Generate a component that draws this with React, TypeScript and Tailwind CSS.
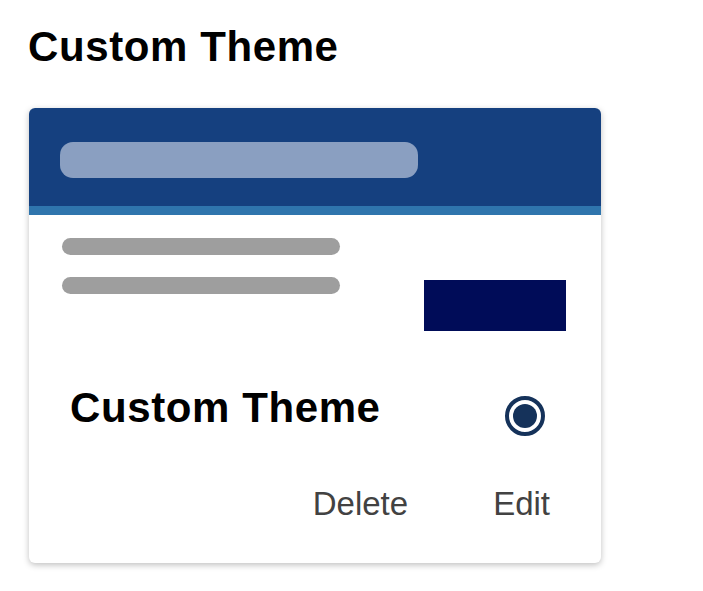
import React from "react";

export default function App() {
  return (
    <div className="min-h-[591px] w-[703px] bg-white pl-[28px] pt-[23px]" style={{ fontFamily: "'Liberation Sans', Arial, sans-serif" }}>
      <h1 className="text-[42px] font-bold leading-[48px] text-black tracking-[0.6px]">Custom Theme</h1>
      <div className="mt-[37px] ml-[1px] w-[572px] h-[455px] rounded-[6px] bg-white overflow-hidden shadow-[0_2px_6px_rgba(0,0,0,0.25)] flex flex-col">
        <div className="h-[98px] bg-[#15407f] pl-[31px] pt-[34px]">
          <div className="h-[36px] w-[358px] rounded-[13px] bg-[#8a9fc1]" />
        </div>
        <div className="h-[9px] bg-[#2f75ad]" />
        <div className="flex items-start justify-between pl-[33px] pr-[35px] pt-[23px]">
          <div className="flex flex-col gap-[22px]">
            <div className="h-[17px] w-[278px] rounded-full bg-[#9e9e9e]" />
            <div className="h-[17px] w-[278px] rounded-full bg-[#9e9e9e]" />
          </div>
          <div className="mt-[42px] h-[51px] w-[142px] bg-[#000c58]" />
        </div>
        <div className="mt-[53px] flex h-[48px] items-start justify-between pl-[41px] pr-[56px]">
          <span className="text-[42px] font-bold leading-[48px] text-black tracking-[0.6px]">Custom Theme</span>
          <div className="mt-[12px] flex h-[40px] w-[40px] items-center justify-center rounded-full border-[4px] border-[#15325a]">
            <div className="h-[24px] w-[24px] rounded-full bg-[#15325a]" />
          </div>
        </div>
        <div className="mt-[52px] flex justify-end gap-[85px] pr-[51px]">
          <span className="text-[33px] leading-[40px] text-[#424242]">Delete</span>
          <span className="text-[33px] leading-[40px] text-[#424242]">Edit</span>
        </div>
      </div>
    </div>
  );
}
